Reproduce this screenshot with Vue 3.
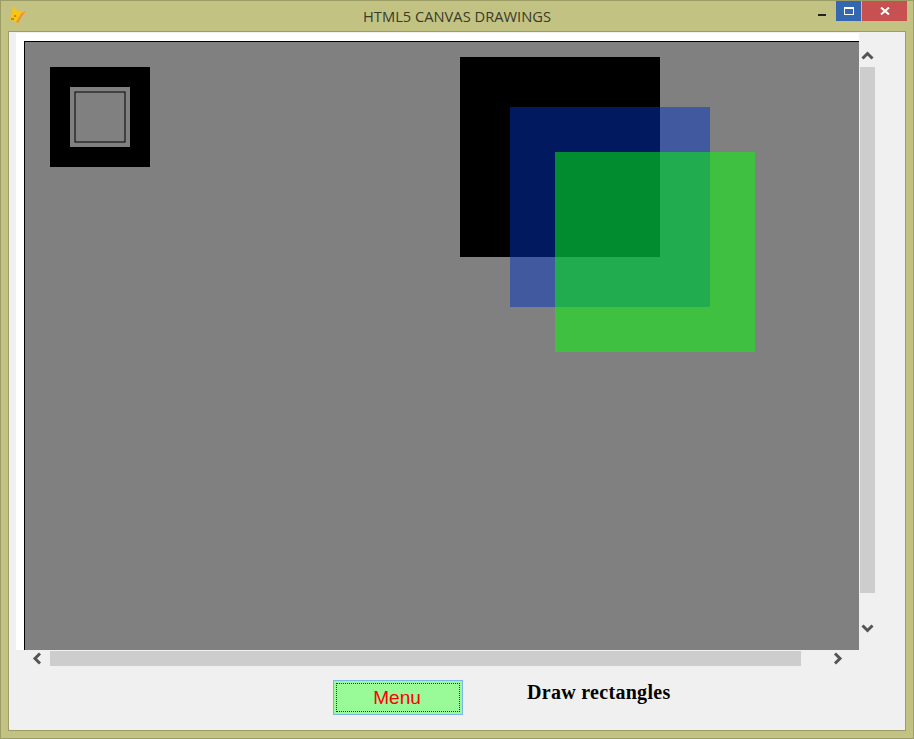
<template>
  <div class="window">
    <header class="titlebar">
      <svg class="app-icon" width="17" height="17" viewBox="0 0 17 17">
        <path d="M3 0 L5 0 L8 5 L16 4 L12 9 L8 16 L5 15 L0 12 L2 6 Z" fill="#fbc312" />
        <path d="M16 4 L12 9 L8 16 L6 15 L9.5 9.5 L11.5 6 Z" fill="#f28c3e" />
        <path d="M4 9h2M1 12h3" stroke="#7a5410" stroke-width="1" />
      </svg>
      <span class="title">HTML5 CANVAS DRAWINGS</span>
      <div class="controls">
        <span class="ctl-min"></span>
        <button class="ctl ctl-max"><span class="max-glyph"></span></button>
        <button class="ctl ctl-close">
          <svg width="10" height="8" viewBox="0 0 10 8">
            <path d="M1 0.5 L9 7.5 M9 0.5 L1 7.5" stroke="#fff" stroke-width="2" />
          </svg>
        </button>
      </div>
    </header>

    <main class="client">
      <div class="scroller">
        <div class="viewport">
          <svg class="drawing" width="835" height="608" viewBox="0 0 835 608">
            <rect width="835" height="608" fill="#808080" />
            <rect x="25" y="25" width="100" height="100" fill="#000" />
            <rect x="45" y="45" width="60" height="60" fill="#808080" />
            <rect x="50" y="50" width="50" height="50" fill="none" stroke="#000" stroke-width="1" />
            <rect x="435" y="15" width="200" height="200" fill="#000" />
            <rect x="485" y="65" width="200" height="200" fill="rgba(0,50,190,0.5)" />
            <rect x="530" y="110" width="200" height="200" fill="rgba(0,255,0,0.5)" />
          </svg>
        </div>
        <div class="vbar">
          <svg class="arrow" width="16" height="34" viewBox="0 0 16 34">
            <path d="M3.5 25.5 L8.5 20.5 L13.5 25.5" fill="none" stroke="#555" stroke-width="3" />
          </svg>
          <div class="vthumb"></div>
          <svg class="arrow" width="16" height="57" viewBox="0 0 16 57">
            <path d="M3.5 32.5 L8.5 37.5 L13.5 32.5" fill="none" stroke="#555" stroke-width="3" />
          </svg>
        </div>
        <div class="hbar">
          <svg class="arrow" width="34" height="16" viewBox="0 0 34 16">
            <path d="M24 3.5 L19 8.5 L24 13.5" fill="none" stroke="#555" stroke-width="3" />
          </svg>
          <div class="hthumb"></div>
          <svg class="arrow" width="58" height="16" viewBox="0 0 58 16">
            <path d="M34 3.5 L39 8.5 L34 13.5" fill="none" stroke="#555" stroke-width="3" />
          </svg>
        </div>
      </div>

      <div class="footer">
        <button class="menu-btn"><span class="menu-focus">Menu</span></button>
        <span class="caption">Draw rectangles</span>
      </div>
    </main>
  </div>
</template>

<script setup>
</script>

<style>
html, body { margin: 0; background: #c2c382; }
</style>

<style scoped>
.window {
  width: 914px;
  height: 739px;
  box-sizing: border-box;
  background: #c2c382;
  border: 1px solid #9c9d66;
  display: flex;
  flex-direction: column;
  padding: 0 7px 7px;
}

.titlebar {
  height: 30px;
  flex: none;
  display: flex;
  align-items: flex-start;
  position: relative;
}
.app-icon { position: absolute; left: 2px; top: 6px; }
.title {
  width: 100%;
  text-align: center;
  font: 14.7px/30px "Open Sans", sans-serif;
  color: #3a3a2a;
}
.controls { position: absolute; right: -1px; top: 0; display: flex; align-items: flex-start; }
.ctl-min { width: 8px; height: 2px; background: #222; margin: 13px 10px 0 0; }
.ctl {
  border: 0;
  padding: 0;
  height: 20px;
  display: flex;
  align-items: center;
  justify-content: center;
}
.ctl-max { width: 25px; background: #3566b0; margin-right: 1px; }
.max-glyph {
  width: 8px;
  height: 5px;
  border: 1px solid #fff;
  border-top-width: 2px;
}
.ctl-close { width: 45px; background: #c75050; }

.client {
  flex: 1;
  background: #f0f0f0;
  border: 1px solid #9c9d66;
  padding: 1px 0 0 7px;
  display: flex;
  flex-direction: column;
  min-height: 0;
}

.scroller {
  display: grid;
  grid-template-columns: 843px 16px;
  grid-template-rows: 617px 16px;
}
.viewport {
  background: #fff;
  padding: 8px 0 0 8px;
  overflow: hidden;
}
.drawing {
  display: block;
  border-top: 1px solid #000;
  border-left: 1px solid #000;
}

.vbar { display: flex; flex-direction: column; }
.vthumb { width: 15px; margin-left: 1px; height: 526px; background: #cdcdcd; flex: none; }
.hbar { display: flex; }
.hthumb { width: 751px; height: 15px; margin-top: 1px; background: #cdcdcd; flex: none; }
.arrow { display: block; flex: none; }

.footer { flex: 1; display: flex; align-items: flex-start; }
.menu-btn {
  margin: 14px 0 0 317px;
  width: 130px;
  height: 35px;
  box-sizing: border-box;
  padding: 2px;
  background: #98fb98;
  border: 1px solid #7eb4ea;
}
.menu-focus {
  display: block;
  height: 100%;
  box-sizing: border-box;
  border: 1px dotted #5a1a6a;
  padding-right: 2px;
  color: #ff0000;
  font: 19px/27px "Liberation Sans", Arial, sans-serif;
  text-align: center;
}
.caption {
  margin: 15px 0 0 64px;
  font: bold 20px/22px "Liberation Serif", serif;
  letter-spacing: 0.3px;
  color: #000;
}
</style>
